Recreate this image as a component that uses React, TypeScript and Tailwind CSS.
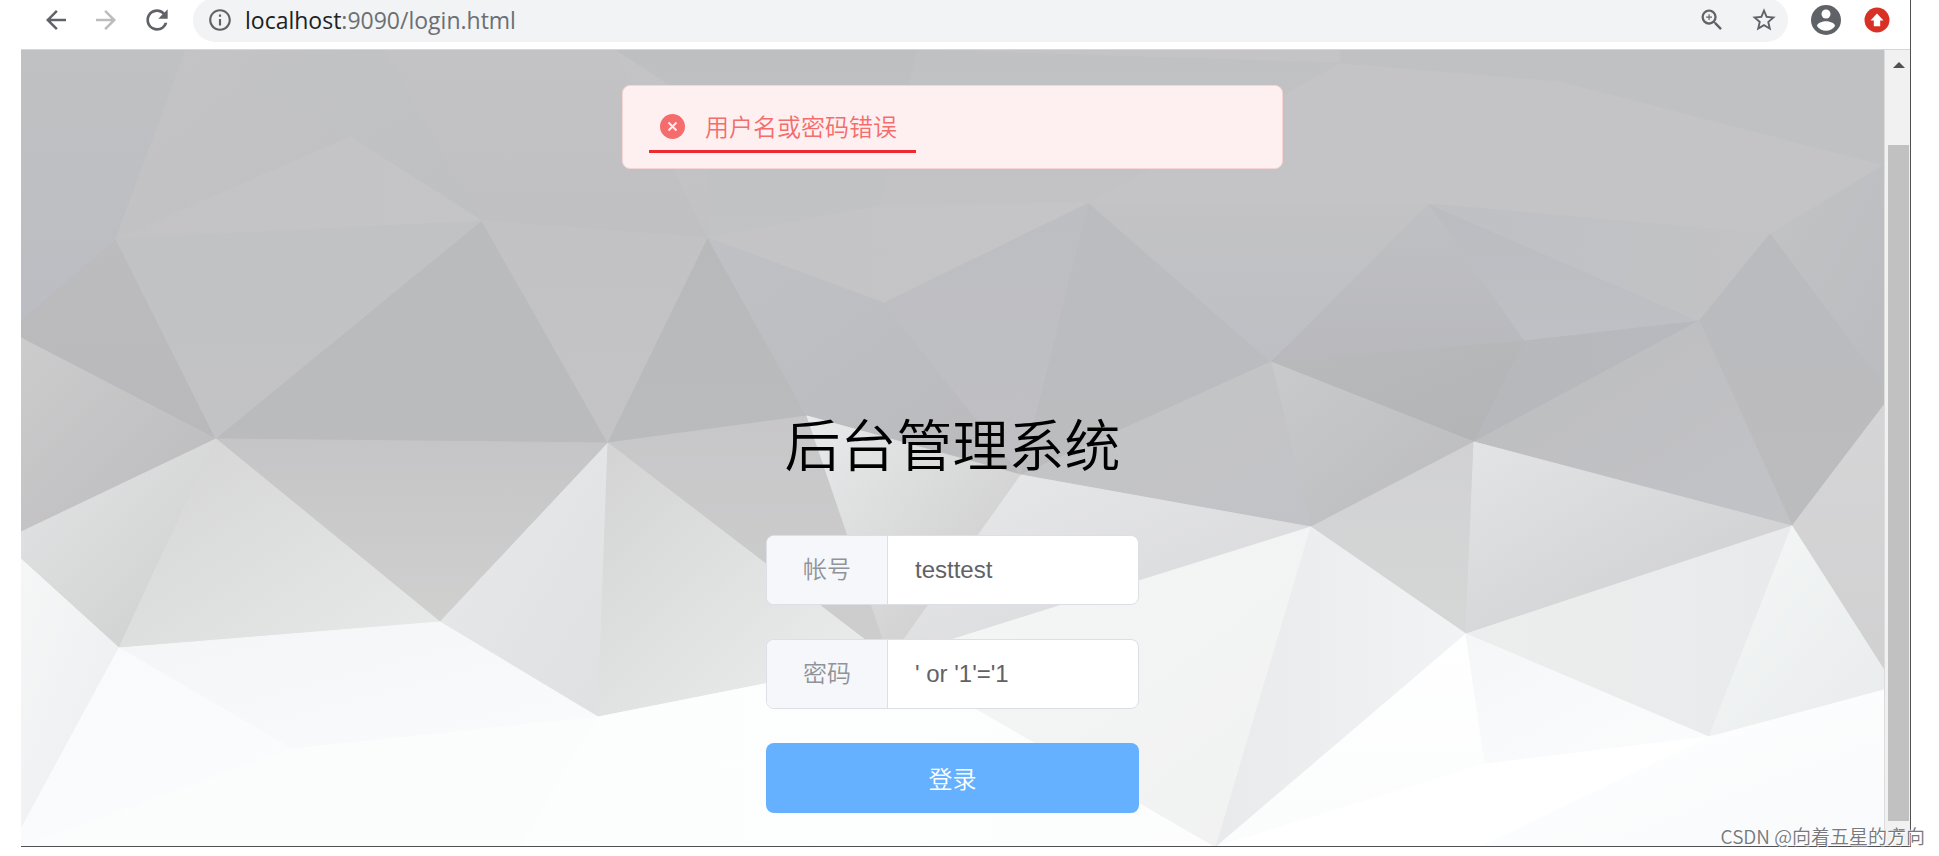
import React from 'react';
import {
  MdArrowBack,
  MdArrowForward,
  MdInfoOutline,
  MdRefresh,
  MdStarBorder,
  MdZoomIn,
} from 'react-icons/md';

type Direction = 'down' | 'right' | 'diagonal' | 'rising';

interface Facet {
  points: string;
  from: string;
  to: string;
  direction: Direction;
}

const vectors: Record<Direction, { x1: number; y1: number; x2: number; y2: number }> = {
  down: { x1: 0, y1: 0, x2: 0, y2: 1 },
  right: { x1: 0, y1: 0, x2: 1, y2: 0 },
  diagonal: { x1: 0, y1: 0, x2: 1, y2: 1 },
  rising: { x1: 0, y1: 1, x2: 1, y2: 0 },
};

const facets: Facet[] = [
  // upper row
  { points: '21,49 186,49 116,238 21,320', from: '#bfc1c2', to: '#bbbdc2', direction: 'down' },
  { points: '186,49 350,136 116,238', from: '#c4c4c6', to: '#c0c0c2', direction: 'diagonal' },
  { points: '186,49 385,49 482,220 350,136', from: '#c3c3c5', to: '#bec0c2', direction: 'diagonal' },
  { points: '350,136 482,220 116,238', from: '#c3c3c5', to: '#c5c5c7', direction: 'right' },
  { points: '385,49 615,49 708,237 482,220', from: '#c3c3c5', to: '#c0c0c2', direction: 'down' },
  { points: '615,49 918,49 880,205 708,237', from: '#bdbfc1', to: '#c2c3c4', direction: 'down' },
  { points: '615,49 708,110 708,237', from: '#c4c4c6', to: '#c2c2c4', direction: 'down' },
  { points: '918,49 1340,62 1089,202 880,205', from: '#c0c1c3', to: '#c3c3c5', direction: 'down' },
  { points: '1340,49 1884,49 1884,164 1560,80 1340,62', from: '#c1c1c3', to: '#bfc1c2', direction: 'diagonal' },
  // middle row
  { points: '21,320 116,238 216,438 21,337', from: '#bcbcbe', to: '#b9b9bb', direction: 'down' },
  { points: '116,238 482,220 216,438', from: '#c0c2c3', to: '#c3c3c5', direction: 'down' },
  { points: '482,220 608,442 216,438', from: '#b9bbbc', to: '#bbbbbd', direction: 'down' },
  { points: '482,220 708,237 608,442', from: '#c2c2c4', to: '#c4c4c6', direction: 'down' },
  { points: '708,237 807,415 608,442', from: '#b8b9ba', to: '#babbbc', direction: 'down' },
  { points: '708,237 880,205 1089,202 884,302', from: '#c4c4c6', to: '#c5c5c7', direction: 'right' },
  { points: '708,237 884,302 1021,474 807,415', from: '#bfc1c5', to: '#bababd', direction: 'diagonal' },
  { points: '884,302 1089,202 1021,474', from: '#bdbec2', to: '#c0c0c4', direction: 'down' },
  { points: '1089,202 1271,361 1021,474', from: '#bbbcc1', to: '#bcbcbe', direction: 'down' },
  { points: '1089,202 1429,203 1271,361', from: '#c3c3c4', to: '#bdbfc4', direction: 'down' },
  { points: '1429,203 1525,340 1271,361', from: '#bfc0c4', to: '#b9b9bd', direction: 'down' },
  { points: '1429,203 1699,320 1525,340', from: '#bbbcc0', to: '#bfc0c5', direction: 'down' },
  { points: '1429,203 1770,233 1699,320', from: '#bec0c4', to: '#c3c3c4', direction: 'right' },
  { points: '1770,233 1884,164 1884,385', from: '#c2c3c4', to: '#bbbcc0', direction: 'diagonal' },
  { points: '1770,233 1884,385 1884,404 1792,525 1699,320', from: '#babbbf', to: '#bcbcbe', direction: 'down' },
  { points: '1271,361 1525,340 1474,441', from: '#b9babc', to: '#b2b4b5', direction: 'diagonal' },
  { points: '1525,340 1699,320 1474,441', from: '#b6b8bb', to: '#b8b9be', direction: 'right' },
  { points: '1699,320 1792,525 1474,441', from: '#bdbdbf', to: '#c2c3c7', direction: 'diagonal' },
  { points: '1271,361 1474,441 1311,526', from: '#c9cacb', to: '#bbbbbd', direction: 'diagonal' },
  { points: '1271,361 1311,526 1021,474', from: '#c5c5c6', to: '#c2c3c7', direction: 'diagonal' },
  { points: '21,337 216,438 21,531', from: '#cccccd', to: '#bbbbbd', direction: 'diagonal' },
  { points: '216,438 608,442 440,621', from: '#c5c5c7', to: '#d0d0cf', direction: 'down' },
  { points: '608,442 807,415 890,658', from: '#c7c7c9', to: '#cecece', direction: 'down' },
  // lower row
  { points: '21,531 216,438 119,647 21,558', from: '#e3e4e5', to: '#cdcecd', direction: 'diagonal' },
  { points: '216,438 440,621 119,647', from: '#d3d4d3', to: '#e8eae9', direction: 'diagonal' },
  { points: '608,442 598,716 440,621', from: '#e9e9eb', to: '#dee0e1', direction: 'diagonal' },
  { points: '608,442 890,658 598,716', from: '#d3d3d3', to: '#eef0f0', direction: 'diagonal' },
  { points: '807,415 1021,474 890,658', from: '#e9eaeb', to: '#c8c8c7', direction: 'diagonal' },
  { points: '1021,474 1311,526 890,658', from: '#e8e9eb', to: '#d6d6d8', direction: 'diagonal' },
  { points: '1311,526 1474,441 1466,633', from: '#d1d1d3', to: '#d5d7d6', direction: 'down' },
  { points: '1474,441 1792,525 1466,633', from: '#e3e4e6', to: '#cccccd', direction: 'diagonal' },
  { points: '1792,525 1884,404 1884,669', from: '#d5d5d7', to: '#d1d1d2', direction: 'down' },
  { points: '21,558 119,647 21,828', from: '#f5f7f7', to: '#ecedef', direction: 'diagonal' },
  { points: '119,647 440,621 598,716 292,748', from: '#f4f5f7', to: '#fafbfc', direction: 'diagonal' },
  { points: '119,647 292,748 21,846 21,828', from: '#f8fafc', to: '#fbfcfd', direction: 'diagonal' },
  { points: '292,748 598,716 520,846 21,846', from: '#fcfcfc', to: '#fbfdfd', direction: 'down' },
  { points: '598,716 890,658 1216,846 520,846', from: '#fcfefd', to: '#fdfdfd', direction: 'right' },
  { points: '890,658 1311,526 1216,846', from: '#f4f7f6', to: '#f1f1f1', direction: 'diagonal' },
  { points: '1311,526 1466,633 1216,846', from: '#e8eaeb', to: '#f2f3f5', direction: 'right' },
  { points: '1466,633 1485,763 1216,846', from: '#ffffff', to: '#fbfcfc', direction: 'down' },
  { points: '1466,633 1792,525 1709,736', from: '#eceeed', to: '#e9eaec', direction: 'right' },
  { points: '1792,525 1884,669 1884,689 1709,736', from: '#f5f8f7', to: '#e9ebec', direction: 'diagonal' },
  { points: '1466,633 1709,736 1485,763', from: '#f5f6f8', to: '#fbfdfd', direction: 'diagonal' },
  { points: '1485,763 1709,736 1480,846 1216,846', from: '#ffffff', to: '#ffffff', direction: 'down' },
  { points: '1709,736 1884,689 1884,846 1480,846', from: '#ffffff', to: '#f8fafb', direction: 'diagonal' },
];

const PolygonBackground: React.FC = () => (
  <svg
    className="absolute inset-0 w-full h-full"
    viewBox="21 49 1863 796"
    preserveAspectRatio="none"
    aria-hidden="true"
  >
    <defs>
      {facets.map((facet, i) => (
        <linearGradient key={i} id={`facet-${i}`} {...vectors[facet.direction]}>
          <stop offset="0" stopColor={facet.from} />
          <stop offset="1" stopColor={facet.to} />
        </linearGradient>
      ))}
    </defs>
    <rect x="21" y="49" width="1863" height="500" fill="#c4c4c6" />
    {facets.map((facet, i) => (
      <polygon
        key={i}
        points={facet.points}
        fill={`url(#facet-${i})`}
        stroke={`url(#facet-${i})`}
        strokeWidth="1"
        strokeLinejoin="round"
      />
    ))}
  </svg>
);

const BrowserToolbar: React.FC = () => (
  <header className="h-[50px] overflow-hidden border-b border-[#d5d6d8] bg-white">
    <div className="flex items-center h-11 -mt-0.5 gap-5 pl-5 pr-5 text-[#5f6368]">
      <button type="button" aria-label="后退">
        <MdArrowBack size={30} />
      </button>
      <button type="button" aria-label="前进" className="text-[#babcbe]">
        <MdArrowForward size={30} />
      </button>
      <button type="button" aria-label="刷新">
        <MdRefresh size={32} />
      </button>
      <div className="flex flex-1 items-center h-11 rounded-full bg-[#f1f3f4] pl-3.5 pr-2.5">
        <MdInfoOutline size={26} />
        <p className="flex-1 pl-3 text-[23px] leading-8 font-['Open_Sans',sans-serif] text-[#6b6f74]">
          <span className="text-[#202124]">localhost</span>:9090/login.html
        </p>
        <div className="flex items-center gap-6">
          <button type="button" aria-label="缩放">
            <MdZoomIn size={28} />
          </button>
          <button type="button" aria-label="收藏">
            <MdStarBorder size={28} />
          </button>
        </div>
      </div>
      <button type="button" aria-label="账户">
        <svg width="36" height="36" viewBox="0 0 24 24">
          <circle cx="12" cy="12" r="10" fill="currentColor" />
          <circle cx="12" cy="8" r="3" fill="#fff" />
          <path
            d="M12 19.2c-2.5 0-4.71-1.28-6-3.22.03-1.99 4-3.08 6-3.08 1.99 0 5.97 1.09 6 3.08-1.29 1.94-3.5 3.22-6 3.22z"
            fill="#fff"
          />
        </svg>
      </button>
      <button type="button" aria-label="更新">
        <svg width="26" height="26" viewBox="0 0 26 26">
          <circle cx="13" cy="13" r="12.5" fill="#d93025" />
          <path d="M13 6.5l6.5 7h-3.3v5.8H9.8v-5.8H6.5z" fill="#fff" />
        </svg>
      </button>
    </div>
  </header>
);

const ErrorMessage: React.FC<{ text: string }> = ({ text }) => (
  <div
    role="alert"
    className="w-[661px] h-[84px] rounded-lg border border-[#f6d5d5] bg-[#fef0f0] px-[26px] pt-4"
  >
    <div className="flex w-[267px] h-[51px] items-center gap-5 border-b-3 border-[#ee2a30] pl-[11px]">
      <svg width="25" height="25" viewBox="0 0 25 25" className="shrink-0">
        <circle cx="12.5" cy="12.5" r="12.5" fill="#f56c6c" />
        <path d="M8.5 8.5l8 8M16.5 8.5l-8 8" stroke="#fef0f0" strokeWidth="2" />
      </svg>
      <p className="whitespace-nowrap text-2xl font-[350] text-[#f56c6c]">{text}</p>
    </div>
  </div>
);

interface FieldProps {
  id: string;
  label: string;
  value: string;
}

const Field: React.FC<FieldProps> = ({ id, label, value }) => (
  <div className="flex w-full h-[70px] overflow-hidden rounded-lg border border-[#dcdfe6] bg-white">
    <label
      htmlFor={id}
      className="flex w-[121px] shrink-0 items-center justify-center border-r border-[#dcdfe6] bg-[#f5f7fa] pb-1 text-2xl font-[350] text-[#909399]"
    >
      {label}
    </label>
    <input
      id={id}
      type="text"
      defaultValue={value}
      className="min-w-0 flex-1 px-[27px] text-2xl font-['Liberation_Sans',Arial,sans-serif] text-[#606266] outline-none"
    />
  </div>
);

const Scrollbar: React.FC = () => (
  <div className="flex w-[26px] shrink-0 flex-col items-center justify-between border-l border-[#dcdcdc] bg-[#f1f1f1] pl-0.5">
    <div className="flex h-[95px] w-full justify-center pt-3">
      <svg width="12" height="6" viewBox="0 0 12 6">
        <path d="M6 0l6 6H0z" fill="#505050" />
      </svg>
    </div>
    <div className="w-[21px] flex-1 bg-[#c1c1c1]" />
    <div className="flex h-[25px] w-full justify-center pt-2">
      <svg width="12" height="6" viewBox="0 0 12 6">
        <path d="M6 6l6-6H0z" fill="#707070" />
      </svg>
    </div>
  </div>
);

const App: React.FC = () => {
  return (
    <div className="relative bg-white pl-[21px] pr-7 pb-[9px] font-['Noto_Sans_CJK_SC',sans-serif]">
      <div className="border-r border-b border-[#505052]">
        <BrowserToolbar />
        <div className="flex">
          <main className="relative flex-1">
            <PolygonBackground />
            <div className="relative flex flex-col items-center pt-[35px] pb-[33px]">
              <ErrorMessage text="用户名或密码错误" />
              <h1 className="mt-[231px] text-[56px] leading-[84px] font-[350] text-black">后台管理系统</h1>
              <form className="mt-[51px] flex w-[373px] flex-col gap-[34px]" onSubmit={(e) => e.preventDefault()}>
                <Field id="username" label="帐号" value="testtest" />
                <Field id="password" label="密码" value="' or '1'='1" />
                <button type="submit" className="h-[70px] rounded-lg bg-[#66b1ff] text-2xl font-[350] text-white">
                  登录
                </button>
              </form>
            </div>
          </main>
          <Scrollbar />
        </div>
      </div>
      <p className="absolute right-3.5 bottom-1.5 text-[19px] leading-7 font-[350] text-[#77797c] [text-shadow:1px_1px_0_#fff,-1px_-1px_0_#ffffff99]">
        CSDN @向着五星的方向
      </p>
    </div>
  );
};

export default App;
